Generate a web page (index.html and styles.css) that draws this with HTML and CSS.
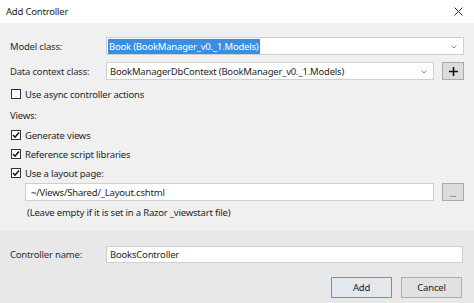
FILE: index.html
```html
<!DOCTYPE html>
<html>
<head>
<meta charset="utf-8">
<link rel="stylesheet" href="styles.css">
</head>
<body>
<div class="dialog">
  <div class="titlebar">
    <span class="title">Add Controller</span>
    <svg class="close" width="9" height="9" viewBox="0 0 9 9"><path d="M0.5 0.5L8.5 8.5M8.5 0.5L0.5 8.5" stroke="#333" stroke-width="1" fill="none"/></svg>
  </div>
  <div class="main">
    <div class="row r-model">
      <span class="label">Model class:</span>
      <div class="field grow">
        <span class="sel">Book (BookManager_v0._1.Models)</span>
        <svg class="chev" width="6" height="4" viewBox="0 0 6 4"><path d="M0.5 0.5L3 3L5.5 0.5" stroke="#8a8a8a" fill="none" stroke-width="1"/></svg>
      </div>
    </div>
    <div class="row r-data">
      <span class="label">Data context class:</span>
      <div class="field grow">
        <span class="txt">BookManagerDbContext (BookManager_v0._1.Models)</span>
        <svg class="chev" width="6" height="4" viewBox="0 0 6 4"><path d="M0.5 0.5L3 3L5.5 0.5" stroke="#8a8a8a" fill="none" stroke-width="1"/></svg>
      </div>
      <div class="sqbtn"><svg width="9" height="9" viewBox="0 0 9 9"><path d="M4.5 0V9M0 4.5H9" stroke="#111" stroke-width="1.6"/></svg></div>
    </div>
    <div class="check r-async">
      <span class="box"></span><span>Use async controller actions</span>
    </div>
    <div class="views">Views:</div>
    <div class="check r-gen">
      <span class="box"><svg width="9" height="9" viewBox="0 0 9 9"><path d="M1.2 4.6L3.4 7L7.9 1.6" stroke="#111" stroke-width="1.7" fill="none"/></svg></span><span>Generate views</span>
    </div>
    <div class="check r-ref">
      <span class="box"><svg width="9" height="9" viewBox="0 0 9 9"><path d="M1.2 4.6L3.4 7L7.9 1.6" stroke="#111" stroke-width="1.7" fill="none"/></svg></span><span>Reference script libraries</span>
    </div>
    <div class="check r-lay">
      <span class="box"><svg width="9" height="9" viewBox="0 0 9 9"><path d="M1.2 4.6L3.4 7L7.9 1.6" stroke="#111" stroke-width="1.7" fill="none"/></svg></span><span>Use a layout page:</span>
    </div>
    <div class="row r-layin">
      <div class="field grow"><span class="txt">~/Views/Shared/_Layout.cshtml</span></div>
      <div class="sqbtn dots"><span>...</span></div>
    </div>
    <div class="hint">(Leave empty if it is set in a Razor _viewstart file)</div>
  </div>
  <div class="footer">
    <div class="row r-ctrl">
      <span class="label">Controller name:</span>
      <div class="field grow"><span class="txt">BooksController</span></div>
    </div>
    <div class="buttons">
      <div class="btn primary">Add</div>
      <div class="btn">Cancel</div>
    </div>
  </div>
</div>
</body>
</html>
```
FILE: styles.css
```css
* { box-sizing: border-box; }
html, body { margin: 0; padding: 0; }
body {
  width: 474px;
  height: 303px;
  overflow: hidden;
  font-family: "Noto Sans", "Open Sans", sans-serif;
  font-size: 9.5px;
  letter-spacing: -0.2px;
  color: #262626;
  background: #f0f0f0;
}
.dialog { display: flex; flex-direction: column; height: 303px; }
.titlebar {
  height: 23px;
  background: #ffffff;
  display: flex;
  align-items: center;
  justify-content: space-between;
  padding: 0 11px 0 6px;
  color: #222;
}
.main {
  height: 207px;
  background: #f0f0f0;
  padding: 14px 10px 0 10px;
  display: flex;
  flex-direction: column;
}
.row { display: flex; align-items: center; }
.label { width: 96px; flex: none; color: #2e2e2e; }
.field {
  height: 18px;
  background: #fff;
  border: 1px solid #cfcfcf;
  display: flex;
  align-items: center;
  padding: 0 1px;
  position: relative;
}
.grow { flex: 1; }
.field .txt { padding-left: 2px; white-space: nowrap; }
.sel {
  background: #3a8ee2;
  color: #fff;
  padding: 1px 1px;
  line-height: 13px;
  white-space: nowrap;
}
.chev { position: absolute; right: 6px; top: 7px; }
.r-data { margin-top: 7px; }
.sqbtn {
  width: 22px;
  height: 18px;
  margin-left: 8px;
  background: #dcdcdc;
  border: 1px solid #a9a9a9;
  display: flex;
  align-items: center;
  justify-content: center;
  flex: none;
}
.dots span { font-size: 8px; line-height: 8px; margin-top: 4px; color: #333; }
.check { display: flex; align-items: center; height: 12px; }
.box {
  width: 10px;
  height: 10px;
  border: 1px solid #333;
  background: #fff;
  margin-left: 1px;
  margin-right: 4px;
  display: flex;
  align-items: center;
  justify-content: center;
  flex: none;
}
.box svg { width: 8px; height: 8px; }
.r-async { margin-top: 8px; }
.views { margin-top: 10px; height: 12px; line-height: 12px; }
.r-gen { margin-top: 7px; }
.r-ref { margin-top: 7px; }
.r-lay { margin-top: 7px; }
.r-layin { margin-top: 4px; margin-left: 15px; }
.r-layin .field .txt { padding-left: 4px; }
.hint { margin-top: 6px; margin-left: 17px; height: 12px; line-height: 12px; }
.footer {
  flex: 1;
  background: #e8e8e8;
  padding: 16px 11px 0 10px;
  display: flex;
  flex-direction: column;
}
.r-ctrl .field { height: 17px; }
.buttons { display: flex; justify-content: flex-end; gap: 9px; margin-top: 14px; padding-right: 1px; }
.btn {
  width: 61px;
  height: 21px;
  background: #e1e1e1;
  border: 1px solid #adadad;
  display: flex;
  align-items: center;
  justify-content: center;
  color: #222;
}
.btn.primary { border-color: #4f9be0; background: #e3e8ee; }
```
